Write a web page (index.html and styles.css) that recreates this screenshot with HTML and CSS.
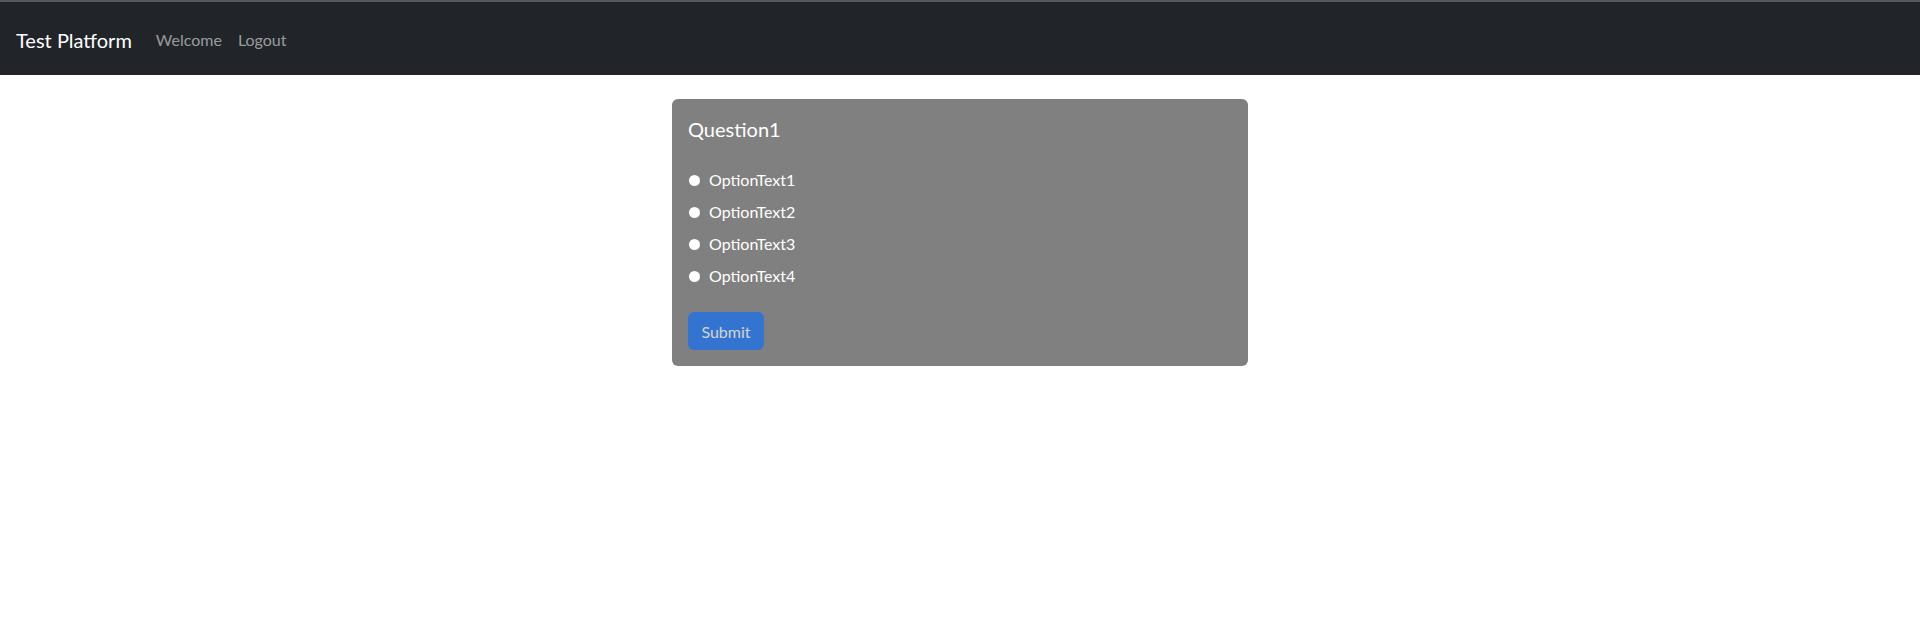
FILE: index.html
```html
<!DOCTYPE html>
<html lang="en">
<head>
<meta charset="utf-8">
<title>Test Platform</title>
<link rel="stylesheet" href="styles.css">
</head>
<body>
<nav class="navbar">
  <a class="brand" href="#">Test Platform</a>
  <ul class="nav-links">
    <li><a href="#">Welcome</a></li>
    <li><a href="#">Logout</a></li>
  </ul>
</nav>
<main class="page">
  <form class="question-card">
    <h5 class="question-title">Question1</h5>
    <div class="options">
      <label class="option"><span class="radio"></span><span>OptionText1</span></label>
      <label class="option"><span class="radio"></span><span>OptionText2</span></label>
      <label class="option"><span class="radio"></span><span>OptionText3</span></label>
      <label class="option"><span class="radio"></span><span>OptionText4</span></label>
    </div>
    <button type="button" class="btn-submit" disabled>Submit</button>
  </form>
</main>
</body>
</html>
```
FILE: styles.css
```css
* { box-sizing: border-box; }
html, body { margin: 0; padding: 0; }
body {
  font-family: Lato, "Noto Sans", sans-serif;
  font-size: 16px;
  line-height: 1.5;
  color: #212529;
  background: #fff;
}
.navbar {
  display: flex;
  align-items: center;
  height: 75px;
  padding: 0 16px;
  background: #212529;
  border-top: 2px solid #55585c;
}
.brand {
  color: #fff;
  text-decoration: none;
  font-size: 20px;
  margin-right: 16px;
  padding-top: 2px;
}
.nav-links {
  display: flex;
  list-style: none;
  margin: 0;
  padding: 0;
  padding-top: 2px;
}
.nav-links a {
  display: block;
  padding: 8px;
  color: rgba(255,255,255,.55);
  text-decoration: none;
  font-size: 16px;
}
.page {
  padding-top: 24px;
}
.question-card {
  width: 30%;
  margin: 0 auto;
  background: #808080;
  border-radius: 6px;
  padding: 16px 16px 16px;
  color: #fff;
}
.question-title {
  margin: 0 0 27px;
  font-size: 20px;
  font-weight: 400;
  line-height: 24px;
  padding-top: 2px;
}
.options {
  display: flex;
  flex-direction: column;
  gap: 8px;
}
.option {
  display: flex;
  align-items: center;
  height: 24px;
  font-size: 16px;
}
.radio {
  width: 11px;
  height: 11px;
  border-radius: 50%;
  background: #fff;
  margin-left: 1px;
  margin-right: 9px;
}
.btn-submit {
  margin-top: 24px;
  width: 76px;
  height: 38px;
  border: 0;
  border-radius: 6px;
  background: #0d6efd;
  color: #fff;
  opacity: .65;
  font-family: inherit;
  font-size: 16px;
  padding: 0;
}
```
